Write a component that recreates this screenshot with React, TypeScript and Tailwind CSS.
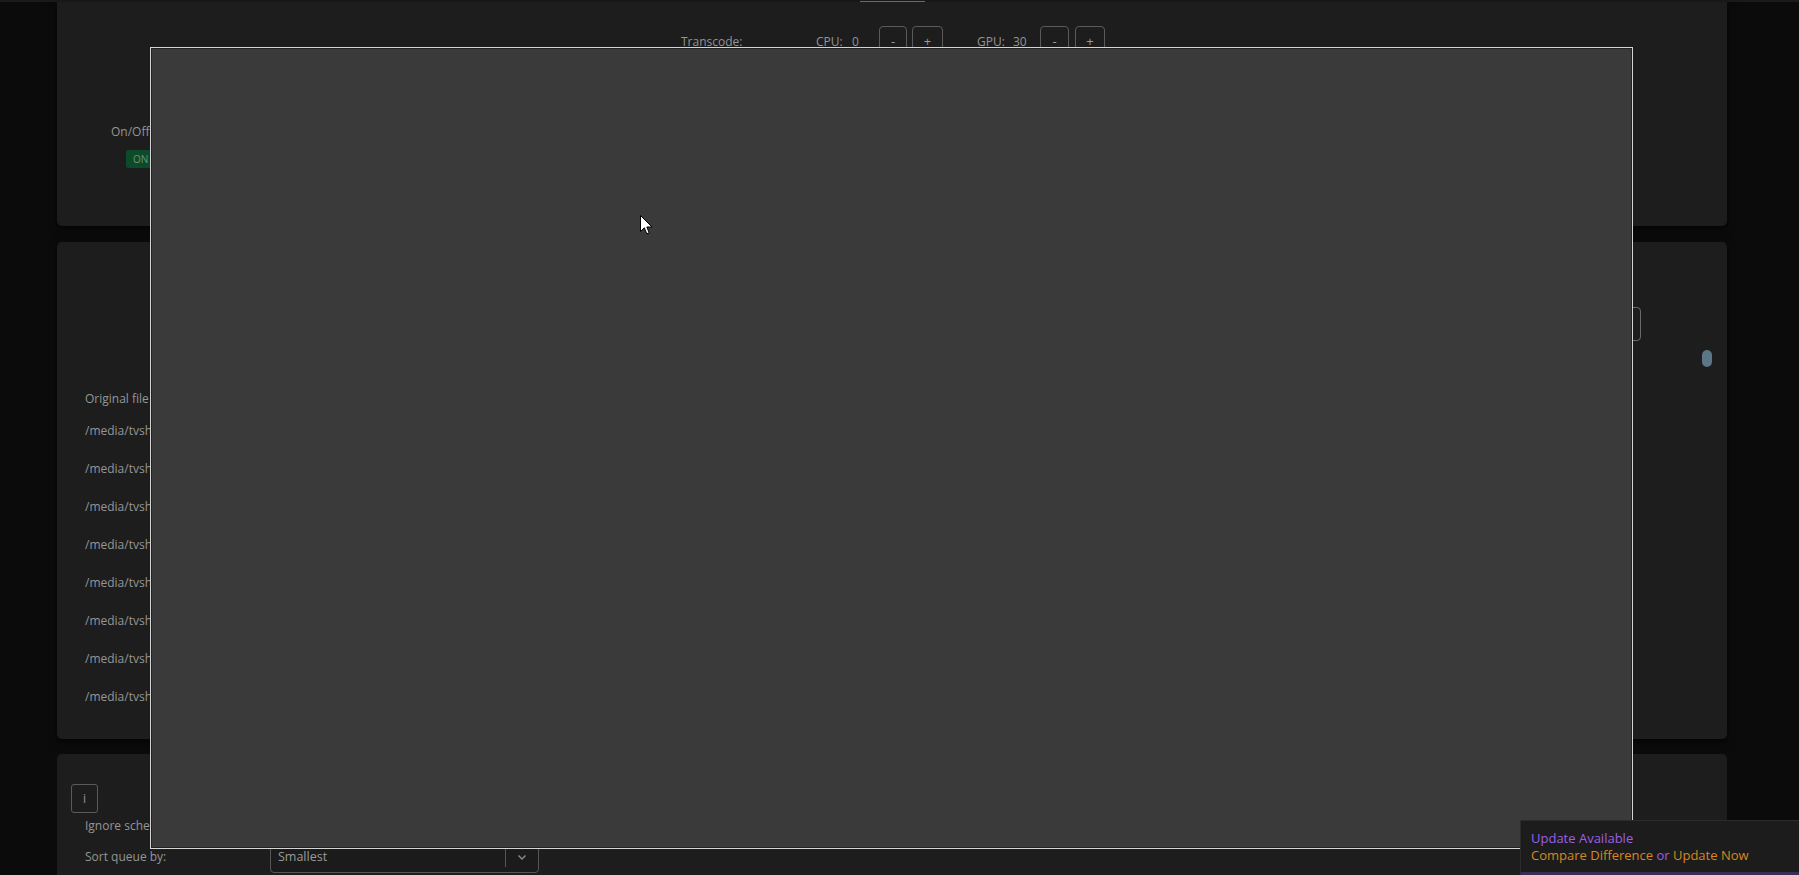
const rows = Array.from({ length: 8 });

function SmallBtn({ label, w }: { label: string; w: string }) {
  return (
    <div
      className={`${w} h-8 flex items-center justify-center rounded-[4px] border border-[#5a5a5a] text-[13px] text-[#9a9a9a]`}
    >
      {label}
    </div>
  );
}

function Cursor() {
  return (
    <svg width="13" height="20" viewBox="0 0 13 20" className="absolute left-[640px] top-[215px]">
      <path
        d="M0.5 0.5 L0.5 16.5 L4.3 12.8 L6.8 18.8 L9.2 17.8 L6.8 12 L12 12 Z"
        fill="#ffffff"
        stroke="#000000"
        strokeWidth="1"
        strokeLinejoin="round"
      />
    </svg>
  );
}

export default function App() {
  return (
    <div
      className="relative w-[1799px] h-[875px] overflow-hidden bg-[#0b0b0b] text-[12px] text-[#959595]"
      style={{ fontFamily: '"Open Sans", "Noto Sans", sans-serif' }}
    >
      {/* top strip */}
      <div className="h-[2px] w-full bg-[#1a1a1a] flex">
        <div className="ml-[860px] w-[65px] h-px mt-px bg-[#6a6a6a]" />
      </div>

      {/* card 1 */}
      <div className="ml-[57px] w-[1670px] h-[224px] bg-[#1d1d1d] rounded-b-[5px] shadow-[0_4px_8px_rgba(0,0,0,0.6)]">
        <div className="flex items-center pt-[24px] pl-[624px]">
          <span className="w-[135px]">Transcode:</span>
          <span className="w-[36px]">CPU:</span>
          <span className="w-[27px]">0</span>
          <SmallBtn label="-" w="w-[28px]" />
          <div className="w-[5px]" />
          <SmallBtn label="+" w="w-[31px]" />
          <span className="ml-[34px] w-[36px]">GPU:</span>
          <span className="w-[27px]">30</span>
          <SmallBtn label="-" w="w-[29px]" />
          <div className="w-[6px]" />
          <SmallBtn label="+" w="w-[30px]" />
        </div>
        <div className="mt-[65px] pl-[54px] leading-[18px]">On/Off</div>
        <div className="mt-[9px] ml-[69px] w-[40px] h-[18px] flex items-center pl-[7px] bg-[#0c4a2a] text-[10px] text-[#6a9479] rounded-[2px]">
          ON
        </div>
      </div>

      {/* card 2 */}
      <div className="relative mt-[16px] ml-[57px] w-[1670px] h-[497px] bg-[#1d1d1d] rounded-[5px] shadow-[0_4px_8px_rgba(0,0,0,0.6)]">
        <div className="flex justify-end pt-[65px] pr-[86px]">
          <div className="w-[140px] h-[34px] rounded-[4px] border border-[#6a6a6a]" />
        </div>
        <div className="mt-[49px] pl-[28px] leading-[18px]">Original file</div>
        <div className="mt-[4px] pl-[28px]">
          {rows.map((_, i) => (
            <div key={i} className="h-[38px] flex items-center">
              /media/tvshows/
            </div>
          ))}
        </div>
        <div className="absolute right-[15px] top-[108px] w-[10px] h-[17px] rounded-full bg-[#5b7685]" />
      </div>

      {/* card 3 */}
      <div className="mt-[15px] ml-[57px] w-[1670px] h-[200px] bg-[#1d1d1d] rounded-[5px]">
        <div className="pt-[30px] pl-[14px]">
          <div className="w-[27px] h-[29px] flex items-center justify-center rounded-[3px] border border-[#5a5a5a] text-[12px]">
            i
          </div>
        </div>
        <div className="mt-[4px] pl-[28px] leading-[18px]">Ignore schedule</div>
        <div className="mt-[6px] pl-[28px] flex items-center">
          <span className="w-[185px]">Sort queue by:</span>
          <div className="w-[269px] h-[32px] flex items-center rounded-[4px] border border-[#555] bg-[#1b1b1b]">
            <span className="flex-1 pl-[7px] text-[12.5px] text-[#9a9a9a]">Smallest</span>
            <div className="w-px h-[20px] bg-[#555]" />
            <div className="w-[32px] flex items-center justify-center">
              <svg width="12" height="12" viewBox="0 0 24 24" fill="none" stroke="#888" strokeWidth="3">
                <path d="M5 9l7 7 7-7" />
              </svg>
            </div>
          </div>
        </div>
      </div>

      {/* modal */}
      <div className="absolute left-[150px] top-[47px] w-[1483px] h-[802px] bg-[#3a3a3a] border border-[#d4d4d4] shadow-[inset_0_0_0_1px_#232323]" />

      {/* update notice */}
      <div className="absolute left-[1520px] top-[820px] w-[279px] h-[55px] bg-[#1c1c1c] border-t border-l border-[#2c2c2c] border-b-[3px] border-b-[#3b2c52] pl-[10px] pt-[9px] text-[13px] leading-[17px]">
        <div className="text-[#9d5fe6]">Update Available</div>
        <div>
          <span className="text-[#d8871f]">Compare Difference</span>
          <span className="text-[#9d5fe6]"> or </span>
          <span className="text-[#d8871f]">Update Now</span>
        </div>
      </div>

      <Cursor />
    </div>
  );
}
